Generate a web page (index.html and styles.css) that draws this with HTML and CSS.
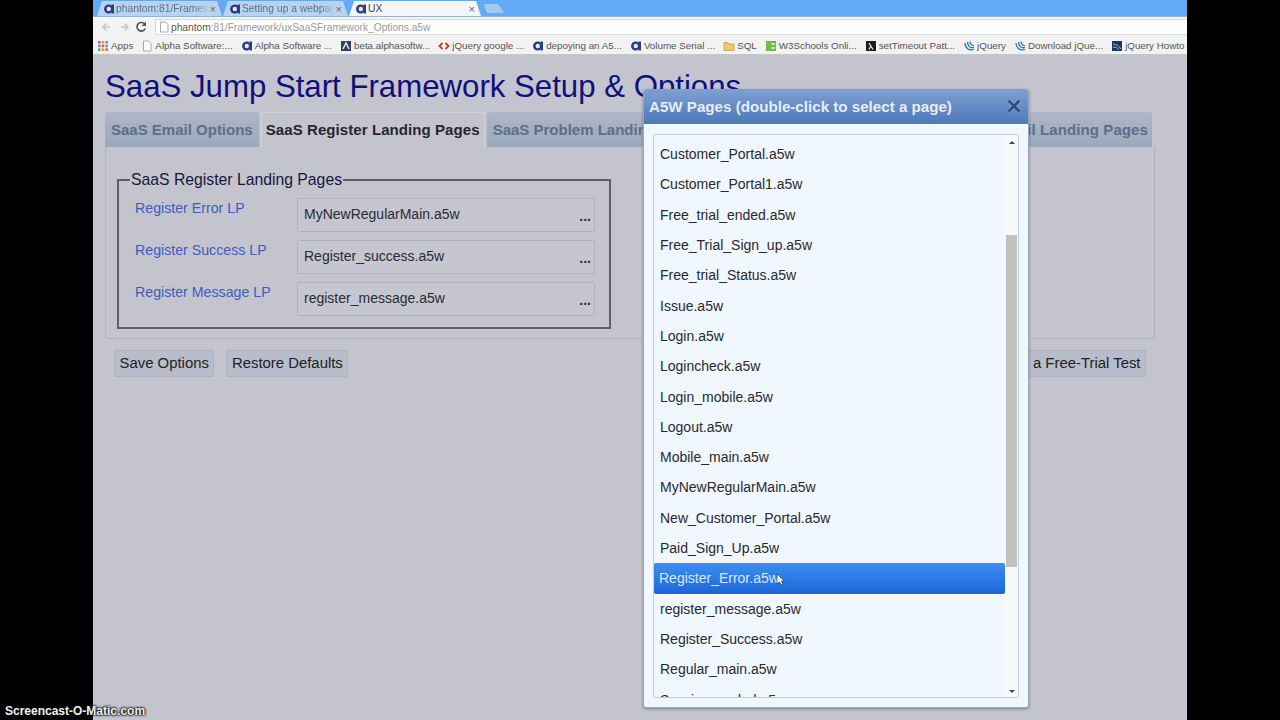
FILE: index.html
```html
<!DOCTYPE html>
<html lang="en">
<head>
<meta charset="utf-8">
<title>UX</title>
<link rel="stylesheet" href="styles.css">
</head>
<body>
<svg class="defs" width="0" height="0" aria-hidden="true">
  <symbol id="alpha" viewBox="0 0 12 12">
    <path d="M6 1.500C3 1.500 1 3.500 1 6s2 4.500 4.600 4.500c1.300 0 2.300-.5 2.900-1.300V10.500H11V1.500H8.500V2.800C7.900 2 7 1.500 6 1.500Z" fill="#2b3f80"/>
    <circle cx="5.800" cy="6" r="2.200" fill="#dfe8f5"/>
  </symbol>
  <symbol id="page" viewBox="0 0 12 12">
    <path d="M2.500 1H7.500L10 3.500V11H2.500Z" fill="#fff" stroke="#a8a8a8"/>
  </symbol>
  <symbol id="jq" viewBox="0 0 12 12">
    <path d="M2 3C2 8 6 11 11 9.500M4.500 2C4.500 6 7.500 8.500 11 7.500M7 1.500C7 4 9 6 11 5.500" fill="none" stroke="#2f6fb5" stroke-width="1.300"/>
  </symbol>
</svg>
<div class="browser">
  <div class="tabstrip">
    <div class="ctab"><svg class="fav"><use href="#alpha"/></svg><span class="ctab-title">phantom:81/Framew</span><span class="ctab-x">×</span></div>
    <div class="ctab"><svg class="fav"><use href="#alpha"/></svg><span class="ctab-title">Setting up a webpag</span><span class="ctab-x">×</span></div>
    <div class="ctab ctab-active"><svg class="fav"><use href="#alpha"/></svg><span class="ctab-title">UX</span><span class="ctab-x">×</span></div>
    <div class="ctab-new"></div>
  </div>
  <div class="toolbar">
    <svg class="nav" width="49" height="14" viewBox="0 0 49 14">
      <path d="M11 7H4.500M7.500 3.500 4 7l3.500 3.500" fill="none" stroke="#c4c8cc" stroke-width="1.600"/>
      <path d="M22 7h6.500M25.500 3.500 29 7l-3.500 3.500" fill="none" stroke="#c4c8cc" stroke-width="1.600"/>
      <path d="M46 4.500A4.300 4.300 0 1 0 46.300 8.500" fill="none" stroke="#555" stroke-width="1.700"/>
      <path d="M47 1.500V6H42.500Z" fill="#555"/>
    </svg>
    <div class="omnibox"><svg class="fav-page"><use href="#page"/></svg><span class="url-host">phantom</span><span class="url-rest">:81/Framework/uxSaaSFramework_Options.a5w</span></div>
  </div>
  <div class="bookmarks">
    <div class="bm bm-apps"><svg class="fav" viewBox="0 0 12 12"><g fill="#d9534f"><rect x="1" y="1" width="2.500" height="2.500"/><rect x="4.700" y="1" width="2.500" height="2.500" fill="#e5a02f"/><rect x="8.400" y="1" width="2.500" height="2.500" fill="#4f8fdc"/><rect x="1" y="4.700" width="2.500" height="2.500" fill="#4f8fdc"/><rect x="4.700" y="4.700" width="2.500" height="2.500"/><rect x="8.400" y="4.700" width="2.500" height="2.500" fill="#55a867"/><rect x="1" y="8.400" width="2.500" height="2.500" fill="#55a867"/><rect x="4.700" y="8.400" width="2.500" height="2.500" fill="#e5a02f"/><rect x="8.400" y="8.400" width="2.500" height="2.500"/></g></svg>Apps</div>
    <div class="bm"><svg class="fav"><use href="#page"/></svg>Alpha Software:...</div>
    <div class="bm"><svg class="fav"><use href="#alpha"/></svg>Alpha Software ...</div>
    <div class="bm"><svg class="fav" viewBox="0 0 12 12"><rect x="1" y="1" width="10" height="10" fill="#33405c"/><path d="M3 9 6 3l3 6" fill="none" stroke="#e8e8d8" stroke-width="1.500"/></svg>beta.alphasoftw...</div>
    <div class="bm"><svg class="fav" viewBox="0 0 12 12"><path d="M4.500 3 1.500 6l3 3M7.500 3l3 3-3 3" fill="none" stroke="#c8382c" stroke-width="1.800"/></svg>jQuery google ...</div>
    <div class="bm"><svg class="fav"><use href="#alpha"/></svg>depoying an A5...</div>
    <div class="bm"><svg class="fav"><use href="#alpha"/></svg>Volume Serial ...</div>
    <div class="bm"><svg class="fav" viewBox="0 0 12 12"><path d="M1 2.500H5L6 4H11V10.500H1Z" fill="#eccb6c" stroke="#c6a145" stroke-width=".8"/></svg>SQL</div>
    <div class="bm"><svg class="fav" viewBox="0 0 12 12"><rect x="1" y="1" width="10" height="10" fill="#72b84c"/><path d="M6 4h4M6 8h4" stroke="#d8f0c8" stroke-width="1.400"/></svg>W3Schools Onli...</div>
    <div class="bm"><svg class="fav" viewBox="0 0 12 12"><rect x="1" y="1" width="10" height="10" fill="#1d1d1d"/><path d="M4 3 8 9.500M6 6 3.800 9.500" stroke="#eee" stroke-width="1.200" fill="none"/></svg>setTimeout Patt...</div>
    <div class="bm"><svg class="fav"><use href="#jq"/></svg>jQuery</div>
    <div class="bm"><svg class="fav"><use href="#jq"/></svg>Download jQue...</div>
    <div class="bm"><svg class="fav" viewBox="0 0 12 12"><rect x="1" y="1" width="10" height="10" fill="#1c3560"/><path d="M2 4C5 4 8 6 10 9M2 7c3 0 5 1 6 3" stroke="#8fc0e8" fill="none"/></svg>jQuery Howto</div>
  </div>
  <main class="page">
    <h1 class="title">SaaS Jump Start Framework Setup &amp; Options</h1>
    <div class="tabs">
      <div class="tab">SaaS Email Options</div>
      <div class="tab tab-active">SaaS Register Landing Pages</div>
      <div class="tab">SaaS Problem Landing Pages</div>
      <div class="tab tab-last">SaaS Email Landing Pages</div>
    </div>
    <div class="panel">
      <fieldset class="group">
        <legend class="group-title">SaaS Register Landing Pages</legend>
        <div class="field">
          <label class="field-label">Register Error LP</label>
          <div class="field-input"><span>MyNewRegularMain.a5w</span><span class="dots">...</span></div>
        </div>
        <div class="field">
          <label class="field-label">Register Success LP</label>
          <div class="field-input"><span>Register_success.a5w</span><span class="dots">...</span></div>
        </div>
        <div class="field">
          <label class="field-label">Register Message LP</label>
          <div class="field-input"><span>register_message.a5w</span><span class="dots">...</span></div>
        </div>
      </fieldset>
    </div>
    <div class="actions">
      <button class="btn">Save Options</button>
      <button class="btn">Restore Defaults</button>
      <button class="btn btn-last">Run a Free-Trial Test</button>
    </div>
  </main>
  <section class="modal">
    <header class="modal-head">
      <span>A5W Pages (double-click to select a page)</span>
      <svg class="modal-x" width="16" height="16" viewBox="0 0 16 16"><path d="M2.500 2.500 13.500 13.500M13.500 2.500 2.500 13.500" stroke="#c3d2e8" stroke-width="4" opacity=".55"/><path d="M2.500 2.500 13.500 13.500M13.500 2.500 2.500 13.500" stroke="#2f4c7c" stroke-width="2.800"/></svg>
    </header>
    <div class="modal-body">
      <div class="listbox">
        <ul class="items">
          <li>Customer_Portal.a5w</li>
          <li>Customer_Portal1.a5w</li>
          <li>Free_trial_ended.a5w</li>
          <li>Free_Trial_Sign_up.a5w</li>
          <li>Free_trial_Status.a5w</li>
          <li>Issue.a5w</li>
          <li>Login.a5w</li>
          <li>Logincheck.a5w</li>
          <li>Login_mobile.a5w</li>
          <li>Logout.a5w</li>
          <li>Mobile_main.a5w</li>
          <li>MyNewRegularMain.a5w</li>
          <li>New_Customer_Portal.a5w</li>
          <li>Paid_Sign_Up.a5w</li>
          <li class="selected">Register_Error.a5w</li>
          <li>register_message.a5w</li>
          <li>Register_Success.a5w</li>
          <li>Regular_main.a5w</li>
          <li>Session_ended.a5w</li>
        </ul>
        <div class="scrollbar">
          <span class="arrow arrow-up"></span>
          <span class="thumb"></span>
          <span class="arrow arrow-down"></span>
        </div>
        <svg class="cursor" width="9" height="13" viewBox="0 0 9 13"><path d="M1 1V11L3.500 8.800 5.200 12 6.800 11.200 5.300 8H8.300Z" fill="#fff" stroke="#222" stroke-width=".6"/></svg>
      </div>
    </div>
  </section>
</div>
<div class="watermark">Screencast-O-Matic.com</div>
</body>
</html>
```
FILE: styles.css
```css
* { box-sizing: border-box; }
html, body { margin: 0; height: 100%; overflow: hidden; }
body {
  background: #000;
  font-family: "Liberation Sans", Arial, sans-serif;
  display: flex;
  justify-content: center;
  position: relative;
}
.defs { position: absolute; }
.browser {
  width: 1094px;
  height: 720px;
  display: flex;
  flex-direction: column;
  position: relative;
  background: #c4c4cf;
}
.fav { width: 12px; height: 12px; flex: none; }

/* tab strip */
.tabstrip {
  height: 17px;
  flex: none;
  background: #62a9f7;
  display: flex;
  align-items: flex-end;
  padding-left: 4px;
  border-bottom: 1px solid #8eb7d6;
}
.ctab {
  width: 125px;
  height: 15px;
  margin-right: 1px;
  background: #b9d3ef;
  clip-path: polygon(0 100%, 5px 0, calc(100% - 5px) 0, 100% 100%);
  display: flex;
  align-items: center;
  gap: 1px;
  padding: 0 6px 0 6px;
  font-size: 10.300px;
  color: #5b6f86;
}
.ctab-title {
  flex: 1;
  overflow: hidden;
  white-space: nowrap;
  -webkit-mask-image: linear-gradient(to right, #000 85%, transparent);
  mask-image: linear-gradient(to right, #000 85%, transparent);
}
.ctab-x { color: #667; font-size: 11px; }
.ctab-active { background: #f4f5f6; color: #444; width: 132px; }
.ctab-active .ctab-title { -webkit-mask-image: none; mask-image: none; }
.ctab-new {
  width: 20px;
  height: 9px;
  margin: 0 0 3px 2px;
  background: #a4c8ee;
  clip-path: polygon(0 0, 70% 0, 100% 100%, 15% 100%);
}

/* toolbar */
.toolbar {
  height: 19px;
  flex: none;
  background: #f4f4f4;
  display: flex;
  align-items: center;
  padding: 0 0 0 6px;
  gap: 7px;
}
.nav { flex: none; }
.omnibox {
  flex: 1;
  height: 16px;
  margin-top: 1px;
  background: #fff;
  border: 1px solid #d8dadc;
  border-right: 0;
  display: flex;
  align-items: center;
  padding-left: 2px;
  font-size: 10.200px;
  white-space: nowrap;
}
.fav-page { width: 12px; height: 12px; margin-right: 1px; }
.url-host { color: #555; }
.url-rest { color: #9a9a9a; }

/* bookmarks */
.bookmarks {
  height: 19px;
  flex: none;
  background: #f2f2f2;
  border-bottom: 1px solid #c9c9c9;
  display: flex;
  align-items: center;
  padding: 1px 0 0 4px;
  gap: 8px;
  font-size: 9.800px;
  color: #555;
  white-space: nowrap;
  overflow: hidden;
}
.bm { display: flex; align-items: center; gap: 2px; }

/* page */
.page { flex: 1; padding: 13px 32px 0 12px; min-height: 0; }
.title {
  margin: 0;
  font-size: 31.200px;
  line-height: 38px;
  font-weight: 400;
  color: #10107c;
}
.tabs { display: flex; gap: 2px; margin-top: 6px; height: 35px; }
.tab {
  padding: 0 6px;
  line-height: 35px;
  font-size: 15px;
  font-weight: 700;
  color: #5a7088;
  background: linear-gradient(#afb6c7, #9ba8bd);
  border-radius: 3px 3px 0 0;
  white-space: nowrap;
}
.tab-active {
  color: #26262e;
  background: #c4c4cf;
  border: 1px solid #d2d2da;
  border-bottom: 0;
  line-height: 33px;
  padding: 0 4px 0 4px;
  letter-spacing: .08px;
}
.tab-last { margin-left: auto; margin-right: 3px; padding-right: 4px; letter-spacing: .1px; }
.panel {
  height: 192px;
  border: 1px solid #b2b2bf;
  border-top: 0;
  border-radius: 0 0 3px 3px;
  padding: 23px 0 0 11px;
}
.group {
  width: 494px;
  min-width: 0;
  height: 159px;
  margin: 0;
  padding: 0 13px 0 16px;
  border: 2px solid #5e5e6c;
}
.group-title {
  padding: 0 1px;
  margin-left: -5px;
  font-size: 15.750px;
  line-height: 19px;
  color: #16163a;
}
.field {
  display: flex;
  height: 42px;
}
.field:first-of-type { margin-top: 9px; }
.field-label {
  width: 162px;
  font-size: 14.200px;
  line-height: 16px;
  padding-top: 2px;
  color: #3d5cc0;
}
.field-input {
  width: 298px;
  height: 34px;
  border: 1px solid #b1b1bd;
  border-radius: 2px;
  background: #c6c6d1;
  display: flex;
  justify-content: space-between;
  align-items: center;
  padding: 0 2px 2px 6px;
  font-size: 14px;
  color: #2a2a30;
}
.dots { font-weight: 700; font-size: 14px; padding: 3px 1px 0 0; }
.actions { display: flex; gap: 12px; margin-top: 11px; padding-left: 9px; padding-right: 9px; }
.btn {
  height: 27px;
  padding: 0 4.500px 2px;
  border: 1px solid #adb1c0;
  border-radius: 2px;
  background: #b8bccb;
  font: 14.900px "Liberation Sans", Arial, sans-serif;
  color: #222;
}
.btn-last { margin-left: auto; }

/* modal */
.modal {
  position: absolute;
  left: 550px;
  top: 89px;
  width: 386px;
  height: 619px;
  background: #f0f7fe;
  border: 1px solid #9aa6bc;
  border-top: 0;
  border-radius: 3px;
  box-shadow: 0 1px 3px rgba(60, 60, 80, .5);
  display: flex;
  flex-direction: column;
}
.modal-head {
  height: 35px;
  flex: none;
  background: linear-gradient(#7f9fd2, #4e79b9);
  display: flex;
  align-items: center;
  justify-content: space-between;
  padding: 0 6px 1px 5px;
  font-size: 15.150px;
  font-weight: 700;
  color: #e6ecf5;
  border-radius: 3px 3px 0 0;
}
.modal-body { flex: 1; padding: 10px 9px 9px; min-height: 0; }
.listbox {
  height: 100%;
  border: 1px solid #c5cbd3;
  border-radius: 2px;
  position: relative;
  overflow: hidden;
  display: flex;
}
.items {
  list-style: none;
  margin: 0;
  padding: 4.200px 0 0;
  flex: 1;
  font-size: 14px;
  color: #2a2a2e;
  min-width: 0;
}
.items li {
  height: 30.300px;
  line-height: 30px;
  padding-left: 6px;
  white-space: nowrap;
}
.items .selected {
  color: #d8e8ff;
  background: linear-gradient(#3d8ff2, #1c66d8);
  border-radius: 2px;
  padding-left: 5px;
}
.scrollbar {
  width: 13px;
  flex: none;
  display: flex;
  flex-direction: column;
  position: relative;
  background: #f7f9fb;
}
.thumb {
  position: absolute;
  top: 100px;
  left: 1px;
  width: 11px;
  height: 332px;
  background: #c1c1bf;
}
.arrow { position: absolute; left: 4px; width: 0; height: 0; border-left: 3px solid transparent; border-right: 3px solid transparent; }
.arrow-up { top: 6px; border-bottom: 3px solid #444; }
.arrow-down { bottom: 4px; border-top: 3px solid #444; }
.cursor { position: absolute; left: 122px; top: 438px; }

.watermark {
  position: absolute;
  left: 5px;
  bottom: 2px;
  font-size: 12px;
  font-weight: 700;
  color: #f0f0f0;
  text-shadow: 0 0 2px #000, 0 0 2px #000, 0 0 3px #000;
}
```
